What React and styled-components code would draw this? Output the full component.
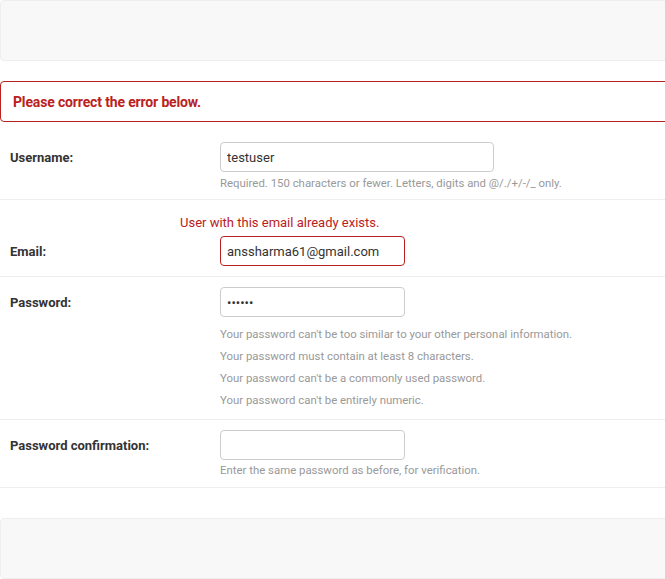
import React from 'react';
import styled, { createGlobalStyle } from 'styled-components';

const GlobalStyle = createGlobalStyle`
  html, body {
    margin: 0;
    padding: 0;
    overflow: hidden;
    background: #fff;
  }
  body {
    font-family: Roboto, "Liberation Sans", Arial, sans-serif;
    font-size: 13px;
    color: #333;
  }
`;

const Page = styled.div`
  margin-right: -20px;
`;

const Panel = styled.div`
  box-sizing: border-box;
  height: 61px;
  background: #f8f8f8;
  border: 1px solid #eee;
  border-radius: 4px;
`;

const BottomPanel = styled(Panel)`
  margin-top: 30px;
`;

const ErrorNote = styled.p`
  margin: 20px 0 10px;
  padding: 11px 12px 9px;
  border: 1px solid #ba2121;
  border-radius: 4px;
  color: #ba2121;
  font-size: 14px;
  font-weight: 700;
  line-height: 19px;
  letter-spacing: -0.15px;
`;

const Row = styled.div`
  padding: 10px;
  border-bottom: 1px solid #eee;
`;

const ErrorList = styled.ul`
  margin: 0 0 4px;
  padding: 3px 0 0 170px;
  list-style: none;
  color: #ba2121;
  font-size: 13px;
  line-height: 19px;
`;

const FieldLine = styled.div`
  display: flex;
  align-items: flex-start;
`;

const Label = styled.label`
  box-sizing: border-box;
  flex: 0 0 210px;
  height: 30px;
  padding-top: 2px;
  font-weight: 700;
  line-height: 28px;
  color: #333;
`;

const FieldStack = styled.div`
  display: flex;
  flex-direction: column;
  align-items: flex-start;
`;

const Input = styled.input`
  box-sizing: border-box;
  width: ${({ $wide }) => ($wide ? '274px' : '185px')};
  height: 30px;
  padding: 5px 6px;
  border: 1px solid ${({ $error }) => ($error ? '#ba2121' : '#ccc')};
  border-radius: 4px;
  font-family: inherit;
  font-size: 13px;
  color: #333;
  background: #fff;
  outline: none;
`;

const Help = styled.div`
  margin-top: ${({ $last }) => ($last ? '4px' : '5px')};
  font-size: 11.4px;
  line-height: ${({ $last }) => ($last ? '13px' : '12px')};
  color: #999;
`;

const HelpList = styled.ul`
  margin: 6px 0 -2px;
  padding: 0;
  list-style: none;
  font-size: 11.4px;
  line-height: 22px;
  color: #999;
`;

const Field = ({ label, value, type, wide, error, errors, help, helpList, last }) => (
  <Row>
    {errors && (
      <ErrorList>
        {errors.map((e) => <li key={e}>{e}</li>)}
      </ErrorList>
    )}
    <FieldLine>
      <Label>{label}</Label>
      <FieldStack>
        <Input type={type} defaultValue={value} readOnly $wide={wide} $error={error} />
        {help && <Help $last={last}>{help}</Help>}
        {helpList && (
          <HelpList>
            {helpList.map((h) => <li key={h}>{h}</li>)}
          </HelpList>
        )}
      </FieldStack>
    </FieldLine>
  </Row>
);

const passwordRules = [
  "Your password can't be too similar to your other personal information.",
  'Your password must contain at least 8 characters.',
  "Your password can't be a commonly used password.",
  "Your password can't be entirely numeric."
];

export default function App() {
  return (
    <Page>
      <GlobalStyle />
      <Panel />
      <ErrorNote>Please correct the error below.</ErrorNote>
      <Field
        label="Username:"
        value="testuser"
        type="text"
        wide
        help="Required. 150 characters or fewer. Letters, digits and @/./+/-/_ only." />
      <Field
        label="Email:"
        value="anssharma61@gmail.com"
        type="text"
        error
        errors={['User with this email already exists.']} />
      <Field
        label="Password:"
        value="secret"
        type="password"
        helpList={passwordRules} />
      <Field
        label="Password confirmation:"
        value=""
        type="password"
        last
        help="Enter the same password as before, for verification." />
      <BottomPanel />
    </Page>
  );
}
